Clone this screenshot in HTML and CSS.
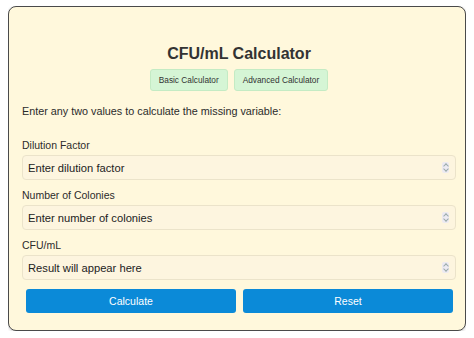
FILE: index.html
```html
<!DOCTYPE html>
<html lang="en">
<head>
    <meta charset="UTF-8">
    <title>CFU/mL Calculator</title>
    <link rel="stylesheet" href="styles.css">
</head>
<body>
    <div class="calculator">
        <h1>CFU/mL Calculator</h1>
        <div class="modes">
            <button class="mode">Basic Calculator</button>
            <button class="mode">Advanced Calculator</button>
        </div>
        <p class="intro">Enter any two values to calculate the missing variable:</p>

        <label for="dilution">Dilution Factor</label>
        <div class="field">
            <input type="text" id="dilution" placeholder="Enter dilution factor">
            <span class="spin"></span>
        </div>

        <label for="colonies">Number of Colonies</label>
        <div class="field">
            <input type="text" id="colonies" placeholder="Enter number of colonies">
            <span class="spin"></span>
        </div>

        <label for="cfu">CFU/mL</label>
        <div class="field">
            <input type="text" id="cfu" placeholder="Result will appear here">
            <span class="spin"></span>
        </div>

        <div class="actions">
            <button class="action">Calculate</button>
            <button class="action">Reset</button>
        </div>
    </div>
</body>
</html>
```

FILE: styles.css
```css
body {
    font-family: "Liberation Sans", Arial, sans-serif;
    background-color: #fff;
    margin: 6px 8px 0 8px;
    color: #2b2b2b;
}

.calculator {
    background-color: #fff8dc;
    border: 1.5px solid #4a4a4a;
    border-radius: 8px;
    box-shadow: 0 1px 3px rgba(0, 0, 0, 0.2);
    height: 325px;
    box-sizing: border-box;
    padding: 37px 9px 0 13px;
}

h1 {
    font-size: 16px;
    text-align: center;
    margin: 0;
    line-height: 20px;
    color: #333;
}

.modes {
    display: flex;
    justify-content: center;
    gap: 6px;
    margin-top: 5px;
}

.mode {
    font-family: inherit;
    font-size: 8.3px;
    color: #333;
    background-color: #d5f5d5;
    border: 1px solid #c4ebc4;
    border-radius: 3px;
    height: 22px;
    padding: 0 8px;
}

.intro {
    font-size: 10.8px;
    margin: 13px 0 0 0;
    line-height: 14px;
}

label {
    display: block;
    font-size: 10.5px;
    line-height: 13px;
}

.intro + label {
    margin-top: 21px;
}

.field {
    position: relative;
    margin: 3px 0 9px 0;
}

.field input {
    width: 100%;
    box-sizing: border-box;
    height: 25px;
    padding: 0 5px;
    font-family: inherit;
    font-size: 11.2px;
    background-color: #fdf5df;
    border: 1px solid #ebe3ca;
    border-radius: 4px;
}

.field input::placeholder {
    color: #222;
}

/* little stepper arrows on the right of each field */
.spin {
    position: absolute;
    right: 7px;
    top: 7px;
    width: 7px;
    height: 11px;
    background-color: #eceaf2;
    border-radius: 2px;
}

.spin::before,
.spin::after {
    content: "";
    position: absolute;
    left: 1.5px;
    width: 3px;
    height: 3px;
    border-left: 1px solid #9aa;
    border-top: 1px solid #9aa;
}

.spin::before {
    top: 2px;
    transform: rotate(45deg);
}

.spin::after {
    bottom: 2px;
    transform: rotate(-135deg);
}

.actions {
    display: flex;
    gap: 7px;
    padding: 0 3px 0 4px;
    margin-top: 7px;
}

.action {
    flex: 1;
    height: 24px;
    font-family: inherit;
    font-size: 10.5px;
    color: #fff;
    background-color: #0b8ad8;
    border: none;
    border-radius: 3px;
}
```
